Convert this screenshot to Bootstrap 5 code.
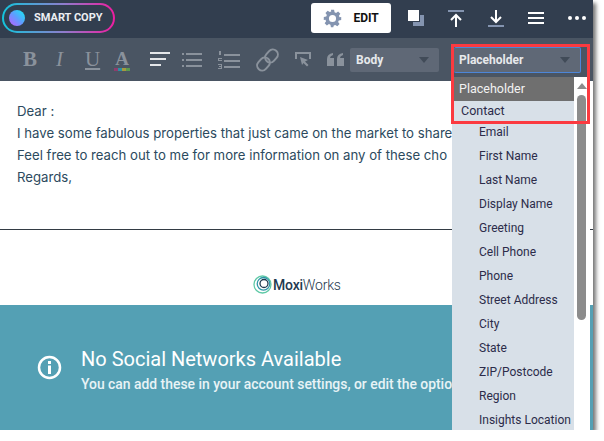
<!DOCTYPE html>
<html lang="en">

<head>
    <meta charset="UTF-8">
    <title>Smart Copy Editor</title>
    <link href="https://cdn.jsdelivr.net/npm/bootstrap@5.3.3/dist/css/bootstrap.min.css" rel="stylesheet">
    <style>
        body {
            background: #fff;
            font-family: Roboto, "Liberation Sans", sans-serif;
        }

        .app-window {
            width: 593px;
            height: 430px;
            box-shadow: 3px 3px 4px #777;
        }

        /* top bar */
        .top-bar {
            height: 38px;
            background: #323e4f;
            padding: 3px 7px 0 2px;
        }

        .smart-pill {
            width: 114px;
            height: 30px;
            padding: 2px;
            border-radius: 15px;
            background: linear-gradient(90deg, #12c4dc, #8f7ccc 55%, #f01ca0);
        }

        .smart-inner {
            border-radius: 13px;
            background: #323e4f;
            padding-left: 5px;
            font-size: 11px;
            font-weight: 700;
            color: #eceff3;
            gap: 9px;
        }

        .smart-dot {
            width: 16px;
            height: 16px;
            border-radius: 50%;
            background: linear-gradient(45deg, #c05cff, #5f9cff 50%, #0ff0f0);
        }

        .edit-btn {
            width: 80px;
            height: 30px;
            margin-left: 196px;
            border-radius: 3px;
            padding-left: 12px;
            gap: 11px;
            font-size: 12px;
            font-weight: 700;
            color: #111;
        }

        .top-icons {
            margin-left: 17px;
            gap: 24px;
            height: 30px;
        }

        /* format bar */
        .format-bar {
            height: 43px;
            background: #4a5563;
            padding-left: 23px;
            gap: 12px;
            color: #8a929c;
        }

        .glyph-btn {
            font-family: "Liberation Serif", serif;
            font-size: 21px;
            line-height: 1;
            width: 13px;
            color: #8a929c;
        }

        .glyph-color {
            width: 16px;
            font-size: 19px;
            font-weight: 700;
            text-align: center;
        }

        .color-strip {
            height: 3px;
            background: linear-gradient(90deg, #8e3d6d 25%, #2d8fa3 25% 50%, #a5993f 50% 75%, #5b9a4e 75%);
        }

        .fake-select {
            font-size: 12px;
            font-weight: 700;
            color: #e7e9ec;
            border-radius: 2px;
            padding: 0 6px;
            background: #5f6876;
        }

        .body-select {
            width: 89px;
            height: 24px;
            margin-left: -6px;
        }

        .holder-select {
            width: 127px;
            height: 26px;
            margin-left: 3px;
            padding-left: 5px;
            border-bottom: 1px solid #4d86d8;
            border-right: 1px solid #4d86d8;
            border-top: 1px solid #4d86d8;
        }

        .caret-down {
            width: 0;
            height: 0;
            border-left: 5px solid transparent;
            border-right: 5px solid transparent;
            border-top: 6px solid #414b58;
        }

        /* message */
        .message-body {
            height: 149px;
            padding: 19px 0 0 17px;
            font-family: Inter, "Liberation Sans", sans-serif;
            font-size: 13.2px;
            line-height: 22px;
            color: #2c4a5e;
            white-space: nowrap;
            border-bottom: 1px solid #333b44;
        }

        .logo-area {
            height: 75px;
            padding-top: 45px;
            padding-left: 253px;
            gap: 1px;
            font-size: 14px;
            font-weight: 500;
            line-height: 20px;
            letter-spacing: -.2px;
            color: #1f3a50;
        }

        .logo-light {
            font-weight: 300;
        }

        /* social notice */
        .social-notice {
            height: 125px;
            background: #54a0b4;
            color: #fff;
            padding: 42px 0 0 37px;
            gap: 19px;
            white-space: nowrap;
        }

        .notice-icon {
            margin-top: 8px;
        }

        .notice-title {
            font-size: 20px;
            line-height: 24px;
        }

        .notice-text {
            font-size: 13.9px;
            font-weight: 500;
            line-height: 20px;
            margin-top: 3px;
            color: #e8f3f6;
        }

        /* placeholder dropdown */
        .holder-menu {
            left: 452px;
            top: 77px;
            width: 138px;
            height: 353px;
            background: #fff;
            overflow: hidden;
        }

        .menu-list {
            width: 122px;
            background: #d8e0e8;
            font-size: 12px;
            color: #2c2c4a;
        }

        .menu-current {
            height: 24px;
            line-height: 24px;
            padding-left: 7px;
            font-size: 12.5px;
            background: #6f6f6f;
            color: #f2f2f2;
        }

        .menu-group {
            height: 19px;
            line-height: 20px;
            padding-left: 9px;
            font-size: 12.5px;
        }

        .menu-item {
            height: 24px;
            line-height: 24px;
            padding-left: 27px;
            white-space: nowrap;
        }

        .menu-scroll {
            width: 16px;
            padding: 6px 0 0 3px;
        }

        .scroll-up {
            width: 0;
            height: 0;
            border-left: 5px solid transparent;
            border-right: 5px solid transparent;
            border-bottom: 6px solid #8c8c8c;
        }

        .scroll-thumb {
            width: 9px;
            height: 225px;
            margin-top: 6px;
            border-radius: 5px;
            background: #8c8c8c;
        }

        .red-callout {
            left: 451px;
            top: 44px;
            width: 139px;
            height: 80px;
            border: 3px solid #fb3a40;
            pointer-events: none;
        }
    </style>
</head>

<body>
    <div class="app-window position-relative">

        <!-- Top bar -->
        <div class="top-bar d-flex align-items-start">
            <div class="smart-pill d-flex">
                <div class="smart-inner flex-grow-1 d-flex align-items-center">
                    <span class="smart-dot"></span>
                    <span>SMART COPY</span>
                </div>
            </div>
            <div class="edit-btn bg-white d-flex align-items-center">
                <svg width="19" height="19" viewBox="0 0 24 24" fill="#8494b0"><path fill-rule="evenodd" d="M10 1h4l.6 3.1 1.9.8 2.6-1.8 2.8 2.8-1.8 2.6.8 1.9L23 10v4l-3.1.6-.8 1.9 1.8 2.6-2.8 2.8-2.6-1.8-1.9.8L13 23h-3l-.6-3.1-1.9-.8-2.6 1.8-2.8-2.8 1.8-2.6-.8-1.9L1 14v-4l3.1-.6.8-1.9-1.8-2.6 2.8-2.8 2.6 1.8 1.9-.8zM12 7.500a4.500 4.500 0 1 0 0 9 4.500 4.500 0 0 0 0-9z"/></svg>
                <span>EDIT</span>
            </div>
            <div class="top-icons d-flex align-items-center">
                <svg width="16" height="16" viewBox="0 0 16 16"><path fill="#8494b0" d="M5 5h11v11H5z"/><path fill="#323e4f" d="M4 0h8v12H4z"/><path fill="#fff" d="M0 0h11v11H0z"/></svg>
                <svg width="16" height="17" viewBox="0 0 16 17"><path fill="#8494b0" d="M0 0h16v2H0z"/><path fill="none" stroke="#fff" stroke-width="2" d="M8 17V5M3 10l5-5 5 5"/></svg>
                <svg width="16" height="17" viewBox="0 0 16 17"><path fill="#8494b0" d="M0 15h16v2H0z"/><path fill="none" stroke="#fff" stroke-width="2" d="M8 0v12M3 7l5 5 5-5"/></svg>
                <svg width="16" height="12" viewBox="0 0 16 12"><path fill="#fff" d="M0 0h16v2H0zM0 5h16v2H0zM0 10h16v2H0z"/></svg>
                <svg width="18" height="4" viewBox="0 0 18 4"><circle cx="2" cy="2" r="2" fill="#fff"/><circle cx="9" cy="2" r="2" fill="#fff"/><circle cx="16" cy="2" r="2" fill="#fff"/></svg>
            </div>
        </div>

        <!-- Format bar -->
        <div class="format-bar d-flex align-items-center">
            <span class="glyph-btn fw-bold">B</span>
            <span class="glyph-btn fst-italic ms-2">I</span>
            <span class="glyph-btn text-decoration-underline ms-1">U</span>
            <span class="glyph-btn glyph-color ms-1">A<span class="color-strip d-block"></span></span>
            <svg class="ms-2" width="20" height="15" viewBox="0 0 20 15"><path fill="#e4e6e9" d="M0 0h20v2H0zM0 6h16v2H0zM0 12h11v2H0z"/></svg>
            <svg width="20" height="14" viewBox="0 0 20 14"><path fill="#8a929c" d="M0 0h2v2H0zM4 0h16v2H4zM0 6h2v2H0zM4 6h16v2H4zM0 12h2v2H0zM4 12h16v2H4z"/></svg>
            <svg class="ms-1" width="22" height="18" viewBox="0 0 22 18"><path fill="#8a929c" d="M6 3h16v2H6zM6 9h16v2H6zM6 15h16v2H6zM1 0h2v4H1zM0 7h4v1H1v1h3v1H0V9zM0 13h4v5H0v-1h3v-1H1v-1h2v-1H0z"/></svg>
            <svg class="ms-1" width="23" height="24" viewBox="0 0 23 24" fill="none" stroke="#8a929c" stroke-width="2"><rect x="10.500" y="1" width="10" height="14" rx="5" transform="rotate(42 15.500 8)"/><rect x="2.500" y="9" width="10" height="14" rx="5" transform="rotate(42 7.500 16)"/></svg>
            <svg class="ms-1" width="16" height="15" viewBox="0 0 16 15"><path fill="none" stroke="#8a929c" stroke-width="2" d="M1 7V1h14v6"/><path fill="#8a929c" d="M5 5l8 3-3 1.500 3.500 3.500-1.500 1.500-3.500-3.500L7 13z"/></svg>
            <svg class="ms-1" width="17" height="13" viewBox="0 0 17 13"><path fill="#8a929c" d="M0 6Q0 1 6 0v2Q3 3 3 5h4v8H0zM10 6q0-5 6-6v2q-3 1-3 3h4v8h-7z"/></svg>
            <div class="fake-select body-select d-flex align-items-center justify-content-between">
                <span>Body</span><span class="caret-down me-1"></span>
            </div>
            <div class="fake-select holder-select d-flex align-items-center justify-content-between">
                <span>Placeholder</span><span class="caret-down me-1"></span>
            </div>
        </div>

        <!-- Message -->
        <div class="message-body">
            <div>Dear :</div>
            <div>I have some fabulous properties that just came on the market to share</div>
            <div>Feel free to reach out to me for more information on any of these cho</div>
            <div>Regards,</div>
        </div>

        <!-- Logo -->
        <div class="logo-area d-flex align-items-start">
            <svg width="19" height="19" viewBox="0 0 19 19" fill="none">
                <circle cx="9.500" cy="9.500" r="8.500" stroke="#5ec9a6" stroke-width="1.300"/>
                <circle cx="10.500" cy="8.800" r="6.300" stroke="#2f96a8" stroke-width="1.300"/>
                <circle cx="11" cy="8.500" r="4" stroke="#1f3a50" stroke-width="1.300"/>
            </svg>
            <span>Moxi<span class="logo-light">Works</span></span>
        </div>

        <!-- Social notice -->
        <div class="social-notice d-flex align-items-start">
            <svg class="notice-icon" width="25" height="25" viewBox="0 0 25 25" fill="none"><circle cx="12.500" cy="12.500" r="10.500" stroke="#fff" stroke-width="2.500"/><path fill="#fff" d="M11 10.500h3V19h-3zM11 6h3v3h-3z"/></svg>
            <div>
                <div class="notice-title">No Social Networks Available</div>
                <div class="notice-text">You can add these in your account settings, or edit the optio</div>
            </div>
        </div>

        <!-- Placeholder dropdown -->
        <div class="holder-menu position-absolute d-flex">
            <div class="menu-list">
                <div class="menu-current">Placeholder</div>
                <div class="menu-group">Contact</div>
                <div class="menu-item">Email</div>
                <div class="menu-item">First Name</div>
                <div class="menu-item">Last Name</div>
                <div class="menu-item">Display Name</div>
                <div class="menu-item">Greeting</div>
                <div class="menu-item">Cell Phone</div>
                <div class="menu-item">Phone</div>
                <div class="menu-item">Street Address</div>
                <div class="menu-item">City</div>
                <div class="menu-item">State</div>
                <div class="menu-item">ZIP/Postcode</div>
                <div class="menu-item">Region</div>
                <div class="menu-item">Insights Location</div>
            </div>
            <div class="menu-scroll">
                <div class="scroll-up"></div>
                <div class="scroll-thumb"></div>
            </div>
        </div>

        <div class="red-callout position-absolute"></div>
    </div>

    <script src="https://cdn.jsdelivr.net/npm/bootstrap@5.3.3/dist/js/bootstrap.bundle.min.js"></script>
</body>

</html>
